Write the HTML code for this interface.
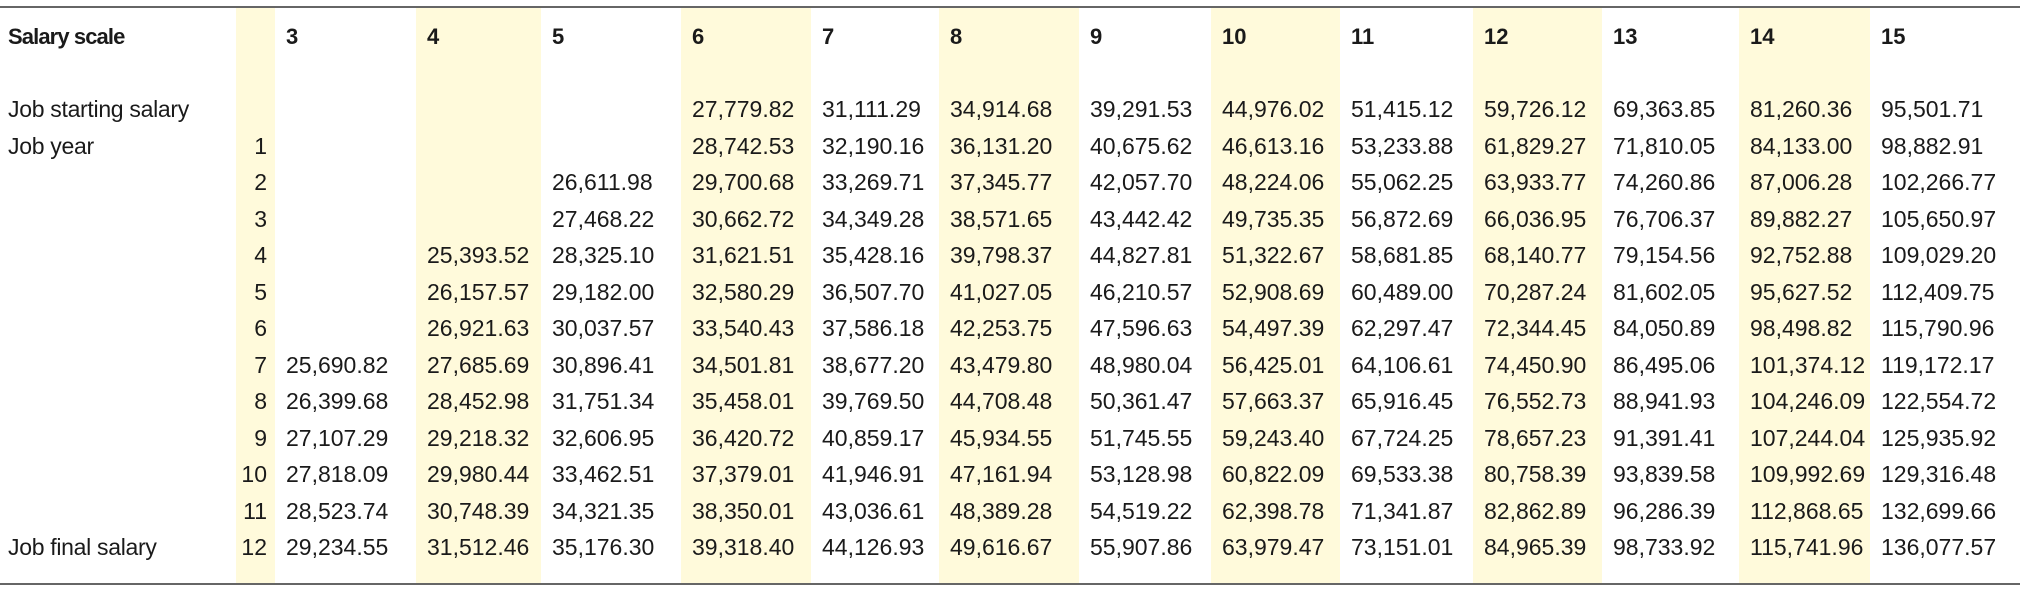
<!DOCTYPE html>
<html><head><meta charset="utf-8"><style>
html,body{margin:0;padding:0;background:#fff;}
body{width:2026px;height:591px;overflow:hidden;position:relative;font-family:"Liberation Sans",Arial,sans-serif;color:#1a1a1a;}
table{position:absolute;left:0;top:6px;border-collapse:collapse;table-layout:fixed;width:2020px;border-top:2px solid #666;border-bottom:2px solid #666;}
td{padding:0 0 0 11px;font-size:23px;white-space:nowrap;overflow:visible;height:36.5px;line-height:36.5px;}
td.l{padding-left:8px;letter-spacing:-0.3px;font-size:23px;}
td.s{text-align:right;padding:0 8px 0 0;}
.h td{height:58px;line-height:58px;font-weight:bold;font-size:22px;}
.h td.l{letter-spacing:-0.9px;font-size:22px;}
.sp td{height:25px;}
.sp2 td{height:17px;}
col.y{background:#fffadb;}
</style></head><body>
<table>
<colgroup><col style="width:236px"><col class="y" style="width:39px"><col style="width:141px"><col class="y" style="width:125px"><col style="width:140px"><col class="y" style="width:130px"><col style="width:128px"><col class="y" style="width:140px"><col style="width:132px"><col class="y" style="width:129px"><col style="width:133px"><col class="y" style="width:129px"><col style="width:137px"><col class="y" style="width:131px"><col style="width:150px"></colgroup>
<tr class="h"><td class="l">Salary scale</td><td></td><td>3</td><td>4</td><td>5</td><td>6</td><td>7</td><td>8</td><td>9</td><td>10</td><td>11</td><td>12</td><td>13</td><td>14</td><td>15</td></tr>
<tr class="sp"><td></td><td></td><td></td><td></td><td></td><td></td><td></td><td></td><td></td><td></td><td></td><td></td><td></td><td></td><td></td></tr>
<tr><td class="l">Job starting salary</td><td class="s"></td><td></td><td></td><td></td><td>27,779.82</td><td>31,111.29</td><td>34,914.68</td><td>39,291.53</td><td>44,976.02</td><td>51,415.12</td><td>59,726.12</td><td>69,363.85</td><td>81,260.36</td><td>95,501.71</td></tr>
<tr><td class="l">Job year</td><td class="s">1</td><td></td><td></td><td></td><td>28,742.53</td><td>32,190.16</td><td>36,131.20</td><td>40,675.62</td><td>46,613.16</td><td>53,233.88</td><td>61,829.27</td><td>71,810.05</td><td>84,133.00</td><td>98,882.91</td></tr>
<tr><td class="l"></td><td class="s">2</td><td></td><td></td><td>26,611.98</td><td>29,700.68</td><td>33,269.71</td><td>37,345.77</td><td>42,057.70</td><td>48,224.06</td><td>55,062.25</td><td>63,933.77</td><td>74,260.86</td><td>87,006.28</td><td>102,266.77</td></tr>
<tr><td class="l"></td><td class="s">3</td><td></td><td></td><td>27,468.22</td><td>30,662.72</td><td>34,349.28</td><td>38,571.65</td><td>43,442.42</td><td>49,735.35</td><td>56,872.69</td><td>66,036.95</td><td>76,706.37</td><td>89,882.27</td><td>105,650.97</td></tr>
<tr><td class="l"></td><td class="s">4</td><td></td><td>25,393.52</td><td>28,325.10</td><td>31,621.51</td><td>35,428.16</td><td>39,798.37</td><td>44,827.81</td><td>51,322.67</td><td>58,681.85</td><td>68,140.77</td><td>79,154.56</td><td>92,752.88</td><td>109,029.20</td></tr>
<tr><td class="l"></td><td class="s">5</td><td></td><td>26,157.57</td><td>29,182.00</td><td>32,580.29</td><td>36,507.70</td><td>41,027.05</td><td>46,210.57</td><td>52,908.69</td><td>60,489.00</td><td>70,287.24</td><td>81,602.05</td><td>95,627.52</td><td>112,409.75</td></tr>
<tr><td class="l"></td><td class="s">6</td><td></td><td>26,921.63</td><td>30,037.57</td><td>33,540.43</td><td>37,586.18</td><td>42,253.75</td><td>47,596.63</td><td>54,497.39</td><td>62,297.47</td><td>72,344.45</td><td>84,050.89</td><td>98,498.82</td><td>115,790.96</td></tr>
<tr><td class="l"></td><td class="s">7</td><td>25,690.82</td><td>27,685.69</td><td>30,896.41</td><td>34,501.81</td><td>38,677.20</td><td>43,479.80</td><td>48,980.04</td><td>56,425.01</td><td>64,106.61</td><td>74,450.90</td><td>86,495.06</td><td>101,374.12</td><td>119,172.17</td></tr>
<tr><td class="l"></td><td class="s">8</td><td>26,399.68</td><td>28,452.98</td><td>31,751.34</td><td>35,458.01</td><td>39,769.50</td><td>44,708.48</td><td>50,361.47</td><td>57,663.37</td><td>65,916.45</td><td>76,552.73</td><td>88,941.93</td><td>104,246.09</td><td>122,554.72</td></tr>
<tr><td class="l"></td><td class="s">9</td><td>27,107.29</td><td>29,218.32</td><td>32,606.95</td><td>36,420.72</td><td>40,859.17</td><td>45,934.55</td><td>51,745.55</td><td>59,243.40</td><td>67,724.25</td><td>78,657.23</td><td>91,391.41</td><td>107,244.04</td><td>125,935.92</td></tr>
<tr><td class="l"></td><td class="s">10</td><td>27,818.09</td><td>29,980.44</td><td>33,462.51</td><td>37,379.01</td><td>41,946.91</td><td>47,161.94</td><td>53,128.98</td><td>60,822.09</td><td>69,533.38</td><td>80,758.39</td><td>93,839.58</td><td>109,992.69</td><td>129,316.48</td></tr>
<tr><td class="l"></td><td class="s">11</td><td>28,523.74</td><td>30,748.39</td><td>34,321.35</td><td>38,350.01</td><td>43,036.61</td><td>48,389.28</td><td>54,519.22</td><td>62,398.78</td><td>71,341.87</td><td>82,862.89</td><td>96,286.39</td><td>112,868.65</td><td>132,699.66</td></tr>
<tr><td class="l">Job final salary</td><td class="s">12</td><td>29,234.55</td><td>31,512.46</td><td>35,176.30</td><td>39,318.40</td><td>44,126.93</td><td>49,616.67</td><td>55,907.86</td><td>63,979.47</td><td>73,151.01</td><td>84,965.39</td><td>98,733.92</td><td>115,741.96</td><td>136,077.57</td></tr>
<tr class="sp2"><td></td><td></td><td></td><td></td><td></td><td></td><td></td><td></td><td></td><td></td><td></td><td></td><td></td><td></td><td></td></tr>
</table>
</body></html>
